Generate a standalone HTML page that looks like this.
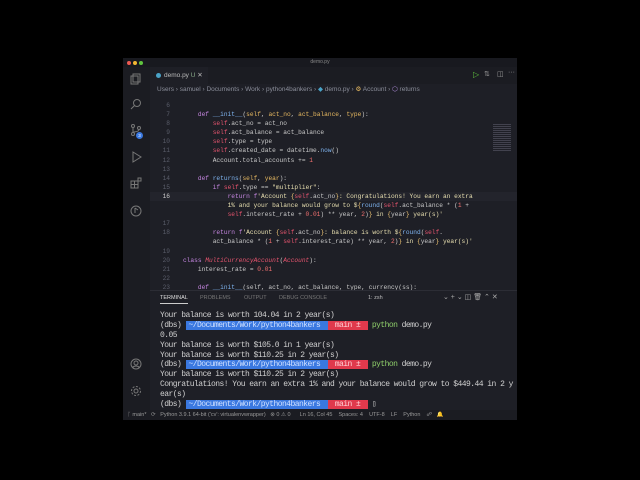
<!DOCTYPE html>
<html><head><meta charset="utf-8"><style>
*{margin:0;padding:0;box-sizing:border-box}
body{width:640px;height:480px;background:#000;position:relative;overflow:hidden;font-family:"Liberation Sans",sans-serif}
.win{position:absolute;left:123px;top:58px;width:394px;height:362px;background:#1e1f26;overflow:hidden}
.title{position:absolute;left:0;top:0;width:394px;height:9px;background:#18191f;color:#888;font-size:5px;text-align:center;line-height:9px}
.dot{position:absolute;top:3px;width:4px;height:4px;border-radius:50%}
.act{position:absolute;left:0;top:9px;width:27px;height:343px;background:#1b1c22}
.ic{position:absolute;left:7px;width:12px;height:12px}
.tabs{position:absolute;left:27px;top:9px;width:367px;height:17px;background:#1b1c22}
.tab{position:absolute;left:0;top:0;width:58px;height:17px;background:#1e1f26;color:#bbb;font-size:6.5px;line-height:17px;padding-left:14px}
.crumb{position:absolute;left:34px;top:27px;font-size:6.5px;color:#8a8d99;white-space:pre}
.code{position:absolute;left:27px;top:43px;width:367px;height:189px;overflow:hidden;font-family:"Liberation Mono",monospace;font-size:6.2px;color:#c8c8c8}
.r{height:9.1px;line-height:9.1px;position:relative;white-space:pre}
.n{position:absolute;left:0;width:20px;text-align:right;color:#5a5d6a}
.t{position:absolute;left:33px}
.k{color:#c586e0}.s{color:#e6546e}.st{color:#e8dfb0}.b{color:#f0c674}.num{color:#f07070}.f{color:#7fb4f0}.c{color:#e6b860}.cl{color:#e6546e;font-style:italic}
.panelh{position:absolute;left:27px;top:232px;width:367px;height:14px;font-size:5.5px;color:#777;border-top:1px solid #2c2d35}
.panelh span{position:absolute;top:4px}
.term{position:absolute;left:37px;top:251px;font-family:"Liberation Mono",monospace;font-size:8px;color:#d0d0d0;letter-spacing:-0.55px}
.tr{height:9.9px;line-height:9.9px;white-space:pre}
.pb{background:#3a78e0;color:#cfe0ff;padding:0 3px}
.pr{background:#e0394c;color:#ffd0d5;padding:0 3px}
.g{color:#8fcf6a}
.status{position:absolute;left:0;top:352px;width:394px;height:10px;background:#1b1c22;font-size:5.5px;color:#999;white-space:pre;line-height:10px}
</style></head><body>
<div class="win">
<div class="title">demo.py
<div class="dot" style="left:4px;background:#ee5a52"></div><div class="dot" style="left:10px;background:#f2b632"></div><div class="dot" style="left:16px;background:#5fc43e"></div></div>
<div class="act">
<svg class="ic" style="top:6px" viewBox="0 0 12 12" fill="none" stroke="#777" stroke-width="1"><rect x="3" y="1" width="7" height="8"/><rect x="1" y="3" width="7" height="8"/></svg>
<svg class="ic" style="top:31px" viewBox="0 0 12 12" fill="none" stroke="#777" stroke-width="1"><circle cx="7" cy="5" r="3.5"/><path d="M4.5 7.5L1 11"/></svg>
<svg class="ic" style="top:57px" viewBox="0 0 12 12" fill="none" stroke="#777" stroke-width="1"><circle cx="3" cy="2" r="1.5"/><circle cx="3" cy="10" r="1.5"/><circle cx="9" cy="4" r="1.5"/><path d="M3 3.5v5M9 5.5c0 3-6 2-6 3"/></svg>
<div style="position:absolute;left:13px;top:65px;width:7px;height:7px;border-radius:50%;background:#3a78e0;color:#fff;font-size:4.5px;text-align:center;line-height:7px">3</div>
<svg class="ic" style="top:84px" viewBox="0 0 12 12" fill="none" stroke="#777" stroke-width="1"><path d="M3 1l8 5-8 5z"/></svg>
<svg class="ic" style="top:110px" viewBox="0 0 12 12" fill="none" stroke="#777" stroke-width="1"><rect x="1" y="4" width="7" height="7"/><path d="M1 7.5h7M4.5 4v7"/><rect x="8" y="1" width="3" height="3"/></svg>
<svg class="ic" style="top:138px" viewBox="0 0 12 12" fill="none" stroke="#777" stroke-width="1"><circle cx="6" cy="6" r="5"/><path d="M5 3v5M5 3l3 2"/></svg>
<svg class="ic" style="top:291px" viewBox="0 0 12 12" fill="none" stroke="#777" stroke-width="1"><circle cx="6" cy="6" r="5"/><circle cx="6" cy="5" r="2"/><path d="M2.5 9.5c2-2 5-2 7 0"/></svg>
<svg class="ic" style="top:318px" viewBox="0 0 12 12" fill="none" stroke="#777" stroke-width="1"><circle cx="6" cy="6" r="2"/><circle cx="6" cy="6" r="4.5" stroke-dasharray="2 1.5"/></svg>
</div>
<div class="tabs"><div class="tab"><span style="position:absolute;left:6px;top:6px;width:5px;height:5px;border-radius:50%;background:#4aa3c8"></span>demo.py <span style="color:#8a8">U</span> ✕</div>
<span style="position:absolute;left:323px;top:3px;color:#5fc43e;font-size:8px">▷</span>
<span style="position:absolute;left:334px;top:3px;color:#999;font-size:7px">⇅</span>
<span style="position:absolute;left:347px;top:3px;color:#999;font-size:7px">◫</span>
<span style="position:absolute;left:358px;top:2px;color:#999;font-size:7px">···</span>
</div>
<div class="crumb">Users › samuel › Documents › Work › python4bankers › <span style="color:#4aa3c8">◆</span> demo.py › <span style="color:#e6b860">⚙</span> Account › <span style="color:#b48ee0">⬡</span> returns</div>
<div class="code"><div class="r"><span class="n">6</span></div><div class="r"><span class="n">7</span><span class="t">    <span class="k">def</span> <span class="f">__init__</span>(<span class="c">self</span>, <span class="c">act_no</span>, <span class="c">act_balance</span>, <span class="c">type</span>):</span></div><div class="r"><span class="n">8</span><span class="t">        <span class="s">self</span>.act_no = act_no</span></div><div class="r"><span class="n">9</span><span class="t">        <span class="s">self</span>.act_balance = act_balance</span></div><div class="r"><span class="n">10</span><span class="t">        <span class="s">self</span>.type = type</span></div><div class="r"><span class="n">11</span><span class="t">        <span class="s">self</span>.created_date = datetime.<span class="f">now</span>()</span></div><div class="r"><span class="n">12</span><span class="t">        Account.total_accounts += <span class="num">1</span></span></div><div class="r"><span class="n">13</span></div><div class="r"><span class="n">14</span><span class="t">    <span class="k">def</span> <span class="f">returns</span>(<span class="c">self</span>, <span class="c">year</span>):</span></div><div class="r"><span class="n">15</span><span class="t">        <span class="k">if</span> <span class="s">self</span>.type == <span class="st">"multiplier"</span>:</span></div><div class="r" style="background:#23242c"><span class="n" style="color:#ccc">16</span><span class="t">            <span class="k">return</span> <span class="k">f</span><span class="st">'Account </span><span class="b">{</span><span class="s">self</span>.act_no<span class="b">}</span><span class="st">: Congratulations! You earn an extra</span></span></div><div class="r"><span class="t">            <span class="st">1% and your balance would grow to $</span><span class="b">{</span><span class="f">round</span>(<span class="s">self</span>.act_balance * (<span class="num">1</span> +</span></div><div class="r"><span class="t">            <span class="s">self</span>.interest_rate + <span class="num">0.01</span>) ** year, <span class="num">2</span>)<span class="b">}</span><span class="st"> in </span><span class="b">{</span>year<span class="b">}</span><span class="st"> year(s)'</span></span></div><div class="r"><span class="n">17</span></div><div class="r"><span class="n">18</span><span class="t">        <span class="k">return</span> <span class="k">f</span><span class="st">'Account </span><span class="b">{</span><span class="s">self</span>.act_no<span class="b">}</span><span class="st">: balance is worth $</span><span class="b">{</span><span class="f">round</span>(<span class="s">self</span>.</span></div><div class="r"><span class="t">        act_balance * (<span class="num">1</span> + <span class="s">self</span>.interest_rate) ** year, <span class="num">2</span>)<span class="b">}</span><span class="st"> in </span><span class="b">{</span>year<span class="b">}</span><span class="st"> year(s)'</span></span></div><div class="r"><span class="n">19</span></div><div class="r"><span class="n">20</span><span class="t"><span class="k">class</span> <span class="cl">MultiCurrencyAccount</span>(<span class="cl">Account</span>):</span></div><div class="r"><span class="n">21</span><span class="t">    interest_rate = <span class="num">0.01</span></span></div><div class="r"><span class="n">22</span></div><div class="r"><span class="n">23</span><span class="t">    <span class="k">def</span> <span class="f">__init__</span>(self, act_no, act_balance, type, currency(ss):</span></div></div>
<div style="position:absolute;left:370px;top:65px;width:18px;height:28px;opacity:.5;background:repeating-linear-gradient(#1e1f26 0 1px,#667 1px 2px)"></div>
<div class="panelh" style="background:#1e1f26">
<span style="left:10px;color:#ddd;border-bottom:1px solid #ccc;padding-bottom:2px">TERMINAL</span><span style="left:50px">PROBLEMS</span><span style="left:94px">OUTPUT</span><span style="left:129px">DEBUG CONSOLE</span><span style="left:218px;color:#bbb">1: zsh</span><span style="left:293px;font-size:7px;top:2px;color:#aaa">⌄ + ⌄ ◫ 🗑 ⌃ ✕</span>
</div>
<div class="term" style="top:253px"><div class="tr">Your balance is worth 104.04 in 2 year(s)</div><div class="tr">(dbs) <span class="pb">~/Documents/Work/python4bankers </span><span class="pr"> main ± </span> <span class="g">python</span> demo.py</div><div class="tr">0.05</div><div class="tr">Your balance is worth $105.0 in 1 year(s)</div><div class="tr">Your balance is worth $110.25 in 2 year(s)</div><div class="tr">(dbs) <span class="pb">~/Documents/Work/python4bankers </span><span class="pr"> main ± </span> <span class="g">python</span> demo.py</div><div class="tr">Your balance is worth $110.25 in 2 year(s)</div><div class="tr">Congratulations! You earn an extra 1% and your balance would grow to $449.44 in 2 y</div><div class="tr">ear(s)</div><div class="tr">(dbs) <span class="pb">~/Documents/Work/python4bankers </span><span class="pr"> main ± </span> ▯</div></div>
<div class="status">   ᚴ main*   ⟳   Python 3.9.1 64-bit ('cv': virtualenvwrapper)   ⊗ 0 ⚠ 0      Ln 16, Col 45    Spaces: 4    UTF-8    LF    Python    ☍   🔔</div>
</div>
</body></html>
